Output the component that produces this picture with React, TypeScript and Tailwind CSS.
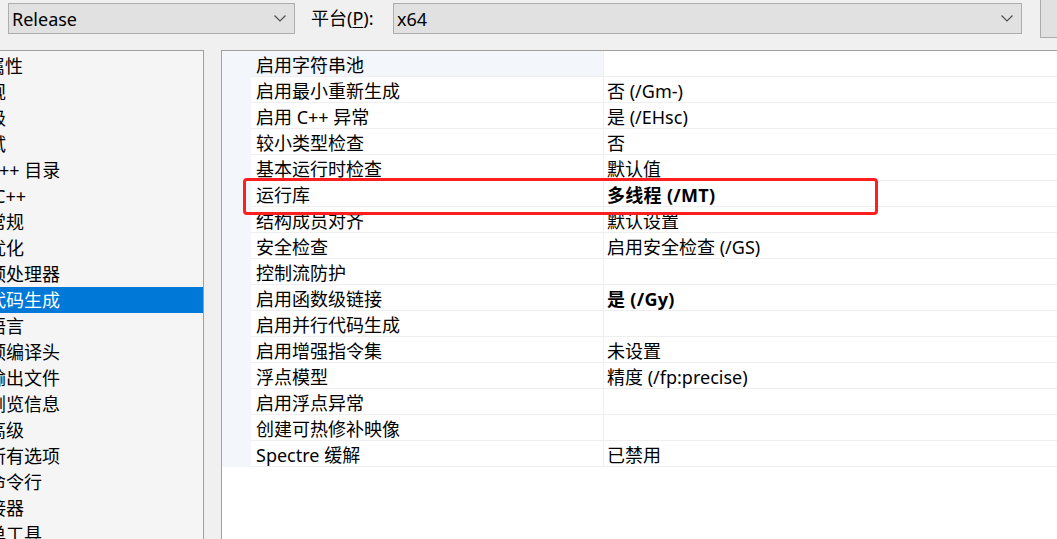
import React from "react";

const FONT = "font-['Segoe_UI','Noto_Sans','Noto_Sans_CJK_SC',sans-serif]";

type TreeItem = { label: string; offset: string; selected?: boolean };

// tree is scrolled horizontally, so the start of each label sits left of the panel
const L0 = "ml-[-49px]";
const L1 = "ml-[-30px]";
const L2 = "ml-[-12px]";

const treeItems: TreeItem[] = [
  { label: "配置属性", offset: L0 },
  { label: "常规", offset: L1 },
  { label: "高级", offset: L1 },
  { label: "调试", offset: L1 },
  { label: "VC++ 目录", offset: "ml-[-23px]" },
  { label: "C/C++", offset: "ml-[-24px]" },
  { label: "常规", offset: L2 },
  { label: "优化", offset: L2 },
  { label: "预处理器", offset: L2 },
  { label: "代码生成", offset: L2, selected: true },
  { label: "语言", offset: L2 },
  { label: "预编译头", offset: L2 },
  { label: "输出文件", offset: L2 },
  { label: "浏览信息", offset: L2 },
  { label: "高级", offset: L2 },
  { label: "所有选项", offset: L2 },
  { label: "命令行", offset: L2 },
  { label: "链接器", offset: L1 },
  { label: "清单工具", offset: L1 },
];

type Prop = { name: string; value?: string; bold?: boolean };

const props: Prop[] = [
  { name: "启用字符串池" },
  { name: "启用最小重新生成", value: "否 (/Gm-)" },
  { name: "启用 C++ 异常", value: "是 (/EHsc)" },
  { name: "较小类型检查", value: "否" },
  { name: "基本运行时检查", value: "默认值" },
  { name: "运行库", value: "多线程 (/MT)", bold: true },
  { name: "结构成员对齐", value: "默认设置" },
  { name: "安全检查", value: "启用安全检查 (/GS)" },
  { name: "控制流防护" },
  { name: "启用函数级链接", value: "是 (/Gy)", bold: true },
  { name: "启用并行代码生成" },
  { name: "启用增强指令集", value: "未设置" },
  { name: "浮点模型", value: "精度 (/fp:precise)" },
  { name: "启用浮点异常" },
  { name: "创建可热修补映像" },
  { name: "Spectre 缓解", value: "已禁用" },
];

function Chevron() {
  return (
    <svg width="12" height="7" viewBox="0 0 12 7" className="shrink-0">
      <path d="M0.5 0.5 L6 6 L11.5 0.5" fill="none" stroke="#4a4a4a" strokeWidth="1.1" />
    </svg>
  );
}

function Combo({ value, width }: { value: string; width: string }) {
  return (
    <div
      className={`${width} shrink-0 h-[31px] bg-[#e1e1e1] border border-[#adadad] flex items-center justify-between pl-[3px] pr-[8px]`}
    >
      <span className="text-[18px] text-black leading-none">{value}</span>
      <Chevron />
    </div>
  );
}

export default function App() {
  return (
    <div className={`relative w-[1057px] h-[539px] overflow-hidden bg-[#f0f0f0] text-black ${FONT}`}>
      {/* top bar */}
      <div className="h-[50px] flex items-start pt-[3px] pl-[8px]">
        <Combo value="Release" width="w-[287px]" />
        <div className="w-[98px] shrink-0 pl-[16px] h-[31px] flex items-center text-[18px]">
          平台(<span className="underline underline-offset-2">P</span>):
        </div>
        <Combo value="x64" width="w-[629px]" />
        <div className="ml-[18px] mt-[-4px] shrink-0 w-[40px] h-[39px] bg-[#e1e1e1] border border-[#adadad]" />
      </div>

      {/* body */}
      <div className="flex h-[489px]">
        {/* tree */}
        <div className="w-[204px] shrink-0 h-full bg-[#f5f5f5] border-t border-r border-[#a0a0a0] overflow-hidden pt-[2px]">
          {treeItems.map((item, i) => (
            <div
              key={i}
              className={`h-[26px] flex items-center whitespace-nowrap text-[18px] ${
                item.selected ? "bg-[#0078d7] text-white" : ""
              }`}
            >
              <span className={item.offset}>{item.label}</span>
            </div>
          ))}
        </div>

        <div className="w-[17px] shrink-0" />

        {/* property grid */}
        <div className="flex-1 h-full bg-white border-t border-l border-[#a0a0a0]">
          <div className="flex">
            <div className="w-[29px] shrink-0 bg-[#f3f6fb]" />
            <div className="flex-1">
              {props.map((p, i) => (
                <div key={p.name} className="flex h-[26px] text-[18px]">
                  <div
                    className={`w-[353px] shrink-0 pl-[5px] pt-[4px] flex items-center border-b border-r border-[#efefef] whitespace-nowrap overflow-hidden ${
                      i === 0 ? "bg-[#f3f6fb]" : ""
                    }`}
                  >
                    {p.name}
                  </div>
                  <div
                    className={`flex-1 pl-[3px] pt-[4px] flex items-center border-b border-[#efefef] whitespace-nowrap ${
                      p.bold ? "font-bold tracking-[0.3px]" : ""
                    }`}
                  >
                    {p.value ?? ""}
                  </div>
                </div>
              ))}
            </div>
          </div>
        </div>
      </div>

      {/* red annotation */}
      <div className="absolute left-[243px] top-[178px] w-[635px] h-[37px] border-[3.5px] border-[#ff1f1f] rounded-[4px]" />
    </div>
  );
}
